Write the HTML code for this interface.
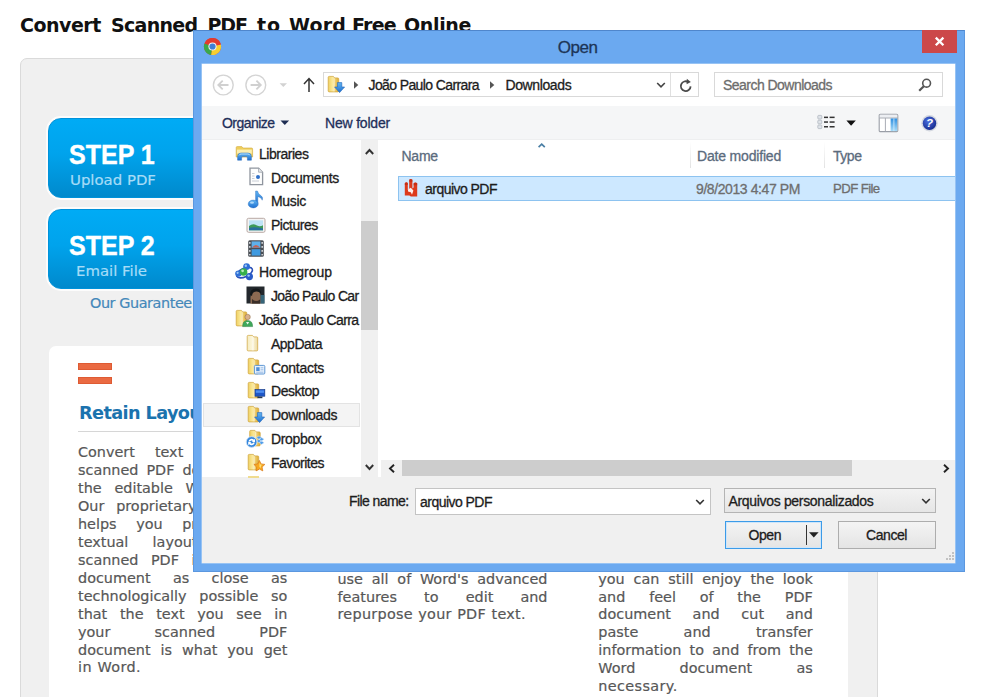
<!DOCTYPE html>
<html lang="en">
<head>
<meta charset="utf-8">
<title>Convert Scanned PDF to Word Free Online</title>
<style>
html,body{margin:0;padding:0;}
body{width:984px;height:697px;overflow:hidden;background:#fff;position:relative;
  font-family:"DejaVu Sans","Liberation Sans",sans-serif;color:#555;}
.abs{position:absolute;white-space:nowrap;}
/* ---------- web page behind ---------- */
#title{left:20px;top:12.5px;font-size:19px;line-height:24px;font-weight:bold;color:#111;}
#panel{position:absolute;left:20px;top:58px;width:858px;height:700px;background:#f0f0f0;
  border:1px solid #dadada;border-radius:7px;box-sizing:border-box;}
.step{position:absolute;left:48px;width:200px;height:80px;border-radius:13px;
  background:linear-gradient(#00abf5 0%,#00a3ec 45%,#0089cc 100%);
  box-shadow:0 0 0 2px rgba(255,255,255,.8);border:1px solid #0092da;box-sizing:border-box;}
.step b{position:absolute;left:19.5px;top:21.5px;-webkit-text-stroke:0.4px;font-family:"Liberation Sans",sans-serif;font-weight:bold;
  font-size:27.5px;line-height:27px;color:#fff;white-space:nowrap;transform:scaleX(.91);transform-origin:0 0;}
.step span{position:absolute;top:52px;-webkit-text-stroke:0.2px;font-size:14.9px;line-height:18px;color:#a6dcf7;white-space:nowrap;}
#guar{left:90px;top:293.6px;font-size:14.4px;letter-spacing:-0.42px;-webkit-text-stroke:0.2px;line-height:18px;color:#4488ba;}
#card{position:absolute;left:49px;top:346px;width:799px;height:400px;background:#fff;border-radius:7px;}
.bar{position:absolute;left:78px;width:34px;height:7px;background:#ea6a42;border:1px solid #de5b33;box-sizing:border-box;}
#h3{left:79px;top:401.8px;font-size:17.7px;letter-spacing:-0.62px;line-height:22px;font-weight:bold;color:#1b73ae;}
#hr{position:absolute;left:78px;top:431px;width:210px;height:1px;background:#d6d6d6;}
.para{position:absolute;font-size:14.4px;line-height:17.95px;color:#575757;-webkit-text-stroke:0.2px;}
.para div{height:17.95px;white-space:nowrap;text-align:justify;text-align-last:justify;overflow:visible;white-space:normal;}
.para div.l{text-align-last:left;word-spacing:0.6px;white-space:nowrap;}
/* ---------- Open dialog ---------- */
#dlg{position:absolute;left:0;top:0;width:0;height:0;}
#dlg div{position:absolute;box-sizing:border-box;}
.seg{font-family:"Liberation Sans",sans-serif;font-size:14px;line-height:16px;-webkit-text-stroke:0.3px;}
.t{color:#1c1c1c;}
.tb{color:#1e2f5a;}
.hd{color:#5b6b7d;}
.gr{color:#6e6e6e;}
#frame{left:193px;top:30px;width:772px;height:542px;background:#6ba9f0;border:1px solid #5b97df;border-top-color:#4f86cc;}
#content{left:202px;top:64px;width:753px;height:499px;background:#fff;box-shadow:0 0 0 .5px rgba(255,255,255,.6);}
#toolbar{left:202px;top:106px;width:753px;height:34px;background:#f5f6f7;border-bottom:1px solid #eeeff0;}
#bottom{left:202px;top:477px;width:753px;height:86px;background:#f0f0f0;}
#dtitle{left:557.7px;top:38.3px;font-size:17px;line-height:20px;color:#1d3557;}
#close{left:922px;top:30px;width:35px;height:23px;background:#cc4849;}
#addr{left:323px;top:72px;width:376px;height:25px;background:#fff;border:1px solid #d9d9d9;}
#addrsep{left:670px;top:73px;width:1px;height:23px;background:#e0e0e0;}
#a1{left:368.5px;top:77px;}
#a2{left:505.5px;top:77px;}
#search{left:714px;top:72px;width:229px;height:25px;background:#fff;border:1px solid #d9d9d9;}
#s1{left:723px;top:77px;color:#6d6d6d;}
#t1{left:222px;top:115px;}
#t2{left:325px;top:115px;}
.n0{left:259px;}
.n1{left:271px;}
#navsel{left:203px;top:403px;width:157px;height:24px;background:#f4f4f4;border:1px solid #e3e3e3;}
#vtrack{left:361px;top:140px;width:17px;height:337px;background:#f0f0f0;}
#vthumb{left:361px;top:221px;width:17px;height:109px;background:#cdcdcd;}
.hsep{top:142px;width:1px;height:26px;background:linear-gradient(#fff,#e2e2e2);}
#h1{left:401.5px;top:148px;}
#h2{left:697px;top:148px;}
#h3d{left:833px;top:148px;}
#row{left:398px;top:176px;width:557px;height:25px;background:#cde8ff;border:1px solid #8dc3f0;border-right:none;}
#r1{left:425px;top:180.5px;}
#r2{left:696px;top:180.5px;}
#r3{left:833px;top:180.5px;font-size:13.2px;}
#htrack{left:381px;top:460px;width:574px;height:17px;background:#f0f0f0;}
#hthumb{left:402px;top:460px;width:450px;height:16px;background:#cdcdcd;}
#f1{left:349px;top:493px;}
#fname{left:415px;top:488px;width:296px;height:27px;background:#fff;border:1px solid #c4c4c4;}
#f2{left:420px;top:494px;}
#ftype{left:724px;top:488px;width:212px;height:25px;background:linear-gradient(#f2f2f2,#e6e6e6);border:1px solid #b4b4b4;}
#f3{left:728.5px;top:492.5px;}
.btn{background:linear-gradient(#f4f4f4,#e4e4e4);border:1px solid #adadad;}
#bopen{left:725px;top:521px;width:97px;height:28px;border-color:#3c9be8;box-shadow:inset 0 0 0 1px #cfe6fa;}
#bcancel{left:838px;top:521px;width:98px;height:28px;}
#b1{left:748.5px;top:527px;}
#b2{left:866px;top:527px;}
#bsep{left:805.5px;top:525px;width:1.5px;height:20px;background:#333;}
#a1{letter-spacing:-0.61px;}
#a2{letter-spacing:-0.39px;}
#t1{letter-spacing:-0.54px;}
#t2{letter-spacing:-0.19px;}
#h1{letter-spacing:-0.24px;}
#h2{letter-spacing:-0.18px;}
#h3d{letter-spacing:-0.46px;}
#r1{letter-spacing:-0.53px;}
#r2{letter-spacing:-0.41px;}
#r3{letter-spacing:-0.59px;}
#f3{letter-spacing:-0.33px;}
#b2{letter-spacing:-0.43px;}
#dtitle{letter-spacing:-0.40px;}
#b1{letter-spacing:-0.44px;}
#f1{letter-spacing:-0.59px;}
#f2{letter-spacing:-0.53px;}
#s1{letter-spacing:-0.53px;}
#n1{letter-spacing:-0.47px;}
#n2{letter-spacing:-0.31px;}
#n3{letter-spacing:-0.31px;}
#n4{letter-spacing:-0.48px;}
#n5{letter-spacing:-0.64px;}
#n6{letter-spacing:-0.02px;}
#n7{letter-spacing:-0.64px;}
#n8{letter-spacing:-0.59px;}
#n9{letter-spacing:-0.50px;}
#n10{letter-spacing:-0.28px;}
#n11{letter-spacing:-0.48px;}
#n12{letter-spacing:-0.36px;}
#n13{letter-spacing:-0.35px;}
#n14{letter-spacing:-0.51px;}
#w0{letter-spacing:-0.50px;}
#w1{letter-spacing:-0.69px;}
#w2{letter-spacing:-1.06px;}
#w3{letter-spacing:0.93px;}
#w4{letter-spacing:0.17px;}
#w5{letter-spacing:-0.73px;}
#w6{letter-spacing:-0.35px;}

</style>
</head>
<body>
<div id="title" class="abs"><span id="w0" class="abs" style="left:0px;top:0">Convert</span> <span id="w1" class="abs" style="left:91px;top:0">Scanned</span> <span id="w2" class="abs" style="left:187.5px;top:0">PDF</span> <span id="w3" class="abs" style="left:237px;top:0">to</span> <span id="w4" class="abs" style="left:269px;top:0">Word</span> <span id="w5" class="abs" style="left:332px;top:0">Free</span> <span id="w6" class="abs" style="left:384px;top:0">Online</span></div>
<div id="panel"></div>
<div class="step" style="top:118px"><b>STEP 1</b><span style="left:21px">Upload PDF</span></div>
<div class="step" style="top:209px"><b>STEP 2</b><span style="left:27px">Email File</span></div>
<div id="guar" class="abs">Our Guarantee</div>
<div id="card"></div>
<div class="bar" style="top:363px"></div>
<div class="bar" style="top:377px"></div>
<div id="h3" class="abs">Retain Layout</div>
<div id="hr"></div>
<div class="para" style="left:78px;top:444.2px;width:209.3px">
<div class="l" style="word-spacing:15.4px">Convert text from a</div>
<div class="l" style="word-spacing:3.4px">scanned PDF document to</div>
<div class="l" style="word-spacing:8.2px">the editable Word file.</div>
<div class="l" style="word-spacing:7.2px">Our proprietary technology</div>
<div class="l" style="word-spacing:15px">helps you preserve the</div>
<div class="l" style="word-spacing:19.7px">textual layout of your</div>
<div class="l" style="word-spacing:7.9px">scanned PDF in the Word</div>
<div>document as close as</div>
<div>technologically possible so</div>
<div>that the text you see in</div>
<div>your scanned PDF</div>
<div>document is what you get</div>
<div class="l" style="letter-spacing:.4px">in Word.</div>
</div>
<div class="para" style="left:337.5px;top:570.6px;width:210px">
<div>use all of Word's advanced</div>
<div>features to edit and</div>
<div class="l" style="letter-spacing:.27px">repurpose your PDF text.</div>
</div>
<div class="para" style="left:598.3px;top:570.6px;width:214.5px">
<div>you can still enjoy the look</div>
<div>and feel of the PDF</div>
<div>document and cut and</div>
<div>paste and transfer</div>
<div>information to and from the</div>
<div>Word document as</div>
<div class="l" style="letter-spacing:.38px">necessary.</div>
</div>
<div id="dlg">
  <svg class="abs" style="left:0;top:0" width="0" height="0"><defs>
<linearGradient id="fg" x1="0" y1="0" x2="1" y2="0"><stop offset="0" stop-color="#efd062"/><stop offset=".42" stop-color="#fbe99a"/><stop offset="1" stop-color="#dcaa34"/></linearGradient>
<linearGradient id="fgp" x1="0" y1="0" x2="1" y2="0"><stop offset="0" stop-color="#f6ecc0"/><stop offset=".5" stop-color="#fcf6dc"/><stop offset="1" stop-color="#ecd9a0"/></linearGradient>
<linearGradient id="bl" x1="0" y1="0" x2="0" y2="1"><stop offset="0" stop-color="#5fb4f2"/><stop offset="1" stop-color="#1f6fd0"/></linearGradient>
<linearGradient id="pv" x1="0" y1="0" x2="0" y2="1"><stop offset="0" stop-color="#2f8fe0"/><stop offset="1" stop-color="#a8dcf8"/></linearGradient>
<radialGradient id="hp" cx=".4" cy=".35" r=".7"><stop offset="0" stop-color="#4a6fe0"/><stop offset="1" stop-color="#15298c"/></radialGradient>
<radialGradient id="cr" cx=".5" cy=".3" r=".8"><stop offset="0" stop-color="#f0584a"/><stop offset="1" stop-color="#c42a1e"/></radialGradient>
</defs></svg>
  <div id="frame"></div>
  <div id="content"></div>
  <div id="toolbar"></div>
  <div id="bottom"></div>
  <!-- title bar -->
  <svg class="abs" style="left:203px;top:37px" width="19" height="19" viewBox="0 0 19 19">
    <circle cx="9.5" cy="9.5" r="8.6" fill="#e33b2e"/>
    <path d="M9.5 9.5 L1.4 6.6 A8.6 8.6 0 0 0 8.2 18 Z" fill="#3aa84a"/>
    <path d="M9.5 9.5 L8.2 18 A8.6 8.6 0 0 0 17.9 7.6 Z" fill="#f7cf2f"/>
    <path d="M1.6 6.2 A8.6 8.6 0 0 1 17.9 7.6 L9.5 7.6 Z" fill="#e33b2e"/>
    <circle cx="9.5" cy="9.5" r="4.1" fill="#f2f2f2"/>
    <circle cx="9.5" cy="9.5" r="3.1" fill="#3f7fd6"/>
  </svg>
  <div id="dtitle" class="abs seg">Open</div>
  <div id="close"><svg width="35" height="23" viewBox="0 0 35 23"><path d="M13.8 7.6 L21.4 15.2 M21.4 7.6 L13.8 15.2" stroke="#fff" stroke-width="2.3" fill="none"/></svg></div>
  <!-- address row -->
  <svg class="abs" style="left:211px;top:73px" width="90" height="24" viewBox="0 0 90 24">
    <circle cx="12.3" cy="12" r="9.9" fill="none" stroke="#d4d4d4" stroke-width="1.4"/>
    <path d="M17.5 12 H7.5 M11.7 7.6 L7.3 12 L11.7 16.4" fill="none" stroke="#d0d0d0" stroke-width="1.8"/>
    <circle cx="44.8" cy="12" r="9.9" fill="none" stroke="#d4d4d4" stroke-width="1.4"/>
    <path d="M39.6 12 H49.6 M45.4 7.6 L49.8 12 L45.4 16.4" fill="none" stroke="#d0d0d0" stroke-width="1.8"/>
    <path d="M68.6 10.3 h7.4 l-3.7 3.7 z" fill="#d2d2d2"/>
  </svg>
  <svg class="abs" style="left:301px;top:76px" width="16" height="18" viewBox="0 0 16 18">
    <path d="M8 16 V3 M3 8 L8 2.6 L13 8" fill="none" stroke="#333" stroke-width="1.5"/>
  </svg>
  <div id="addr"></div>
  <div id="addrsep"></div>
  <svg class="abs" style="left:327px;top:75px" width="19" height="19" viewBox="0 0 19 19"><path d="M1.2 2.4 q0-1 1-1 h4.2 l1.3 1.5 h3 q1 0 1 1 v12 q0 1-1 1 h-8.5 q-1 0-1-1z" fill="url(#fg)" stroke="#cfa23a" stroke-width=".7"/><path d="M6.6 2.2 l1.2 1.4 v13 h-1.6z" fill="#fff" opacity=".45"/><path d="M10.4 7.6 h4.4 v4.4 h2.8 l-5 5.6 l-5-5.6 h2.8z" fill="url(#bl)" stroke="#1f63b8" stroke-width=".6"/></svg>

  <div id="a1" class="abs seg t">João Paulo Carrara</div>
  <div id="a2" class="abs seg t">Downloads</div>
  <svg class="abs" style="left:352px;top:80px" width="8" height="10" viewBox="0 0 8 10"><path d="M2 1.2 L6.3 5 L2 8.8 Z" fill="#555"/></svg>
  <svg class="abs" style="left:488px;top:80px" width="8" height="10" viewBox="0 0 8 10"><path d="M2 1.2 L6.3 5 L2 8.8 Z" fill="#555"/></svg>
  <svg class="abs" style="left:655px;top:80px" width="12" height="10" viewBox="0 0 12 10"><path d="M2.2 3 L6 6.8 L9.8 3" fill="none" stroke="#444" stroke-width="1.6"/></svg>
  <svg class="abs" style="left:678px;top:77.5px" width="16" height="16" viewBox="0 0 16 16"><path d="M12.6 8.4 A4.9 4.9 0 1 1 10.4 4.1" fill="none" stroke="#4a4a4a" stroke-width="1.8"/><path d="M8.8 .8 L12.8 4 L8.6 6.2 Z" fill="#4a4a4a"/></svg>
  <div id="search"></div>
  <div id="s1" class="abs seg">Search Downloads</div>
  <svg class="abs" style="left:917px;top:77px" width="16" height="16" viewBox="0 0 16 16"><circle cx="9.6" cy="6.2" r="3.9" fill="none" stroke="#555" stroke-width="1.6"/><path d="M6.8 9.2 L2.2 13.8" stroke="#555" stroke-width="2.2"/></svg>
  <!-- toolbar row -->
  <div id="t1" class="abs seg tb">Organize</div>
  <svg class="abs" style="left:279px;top:119px" width="12" height="8" viewBox="0 0 12 8"><path d="M1.5 1.5 h8.6 l-4.3 4.6 z" fill="#1d2d52"/></svg>
  <div id="t2" class="abs seg tb">New folder</div>
  <svg class="abs" style="left:817px;top:114px" width="19" height="17" viewBox="0 0 19 17"><g fill="#dfe3e8" stroke="#aab2bc" stroke-width=".7"><rect x=".8" y="1.4" width="4" height="3.6" rx=".8"/><rect x=".8" y="6.2" width="4" height="3.6" rx=".8"/><rect x=".8" y="11" width="4" height="3.6" rx=".8"/></g><g fill="#333"><rect x="7" y="2.6" width="4" height="1.5"/><rect x="12.6" y="2.6" width="5" height="1.5"/><rect x="7" y="7.3" width="4" height="1.5"/><rect x="12.6" y="7.3" width="5" height="1.5"/><rect x="7" y="12" width="4" height="1.5"/><rect x="12.6" y="12" width="5" height="1.5"/></g></svg>
<svg class="abs" style="left:845px;top:119px" width="12" height="8" viewBox="0 0 12 8"><path d="M1.4 1.4 h9.4 l-4.7 5.4z" fill="#111"/></svg>
<svg class="abs" style="left:878px;top:113px" width="21" height="20" viewBox="0 0 21 20"><rect x="1.2" y="1.2" width="18.6" height="17.4" rx="1.2" fill="#fff" stroke="#9a9ea6" stroke-width="1.1"/><rect x="1.8" y="1.8" width="17.4" height="3" fill="#eceef2"/><path d="M1.2 5 h18.6 M7.4 5 v13.4" stroke="#a8acb4" stroke-width="1"/><rect x="12.6" y="5.5" width="6.6" height="12.6" fill="url(#pv)"/><rect x="15.4" y="5.5" width="1" height="12.6" fill="#d6efff" opacity=".8"/></svg>
<svg class="abs" style="left:920px;top:114px" width="19" height="19" viewBox="0 0 19 19"><circle cx="9.5" cy="9.2" r="8.2" fill="#d4d8e0"/><circle cx="9.5" cy="9.2" r="6.7" fill="url(#hp)"/><text x="9.6" y="13.2" text-anchor="middle" font-family="Liberation Sans, sans-serif" font-weight="bold" font-style="italic" font-size="11.5" fill="#fff">?</text></svg>

  <!-- nav pane -->
  <div id="navsel"></div>
  <div id="vtrack"></div><div id="vthumb"></div>
  <svg class="abs" style="left:363px;top:146px" width="13" height="12" viewBox="0 0 13 12"><path d="M2.8 8 L6.5 4 L10.2 8" fill="none" stroke="#333" stroke-width="1.9"/></svg>
  <svg class="abs" style="left:363px;top:461px" width="13" height="12" viewBox="0 0 13 12"><path d="M2.8 4 L6.5 8 L10.2 4" fill="none" stroke="#333" stroke-width="1.9"/></svg>
  <div id="n1" class="abs seg t n0" style="top:146px">Libraries</div>
  <div id="n2" class="abs seg t n1" style="top:169.5px">Documents</div>
  <div id="n3" class="abs seg t n1" style="top:193px">Music</div>
  <div id="n4" class="abs seg t n1" style="top:217px">Pictures</div>
  <div id="n5" class="abs seg t n1" style="top:240.5px">Videos</div>
  <div id="n6" class="abs seg t n0" style="top:264px">Homegroup</div>
  <div id="n7" class="abs seg t n1" style="top:288px">João Paulo Car</div>
  <div id="n8" class="abs seg t n0" style="top:312px">João Paulo Carra</div>
  <div id="n9" class="abs seg t n1" style="top:336px">AppData</div>
  <div id="n10" class="abs seg t n1" style="top:359.5px">Contacts</div>
  <div id="n11" class="abs seg t n1" style="top:383px">Desktop</div>
  <div id="n12" class="abs seg t n1" style="top:407px">Downloads</div>
  <div id="n13" class="abs seg t n1" style="top:431px">Dropbox</div>
  <div id="n14" class="abs seg t n1" style="top:454.5px">Favorites</div>
  <svg class="abs" style="left:235px;top:145px" width="19" height="16" viewBox="0 0 19 16"><path d="M1.2 2.6 q0-1 1-1 h4.6 l1.4 1.4 h8.4 q1 0 1 1 v8 h-16.4z" fill="#efcf5c" stroke="#d2aa40" stroke-width=".6"/><path d="M2 4.6 h14.8 v4 h-14.8z" fill="#fbeeb0"/><path d="M2.6 15.2 v-3.6 q0-3.6 3.4-3.6 h7 q3.4 0 3.4 3.6 v3.6 h-4 v-2.4 q0-1.2-1.2-1.2 h-3.4 q-1.2 0-1.2 1.2 v2.4z" fill="url(#bl)" stroke="#2a6dbd" stroke-width=".5"/><path d="M4 10.4 q.6-1.4 2.2-1.4 h6.6 q1.6 0 2.2 1.4" fill="none" stroke="#bfe2fb" stroke-width=".9"/></svg>
<svg class="abs" style="left:248px;top:167px" width="17" height="19" viewBox="0 0 17 19"><path d="M2 1.2 h8.6 l4 4 v12.4 h-12.6z" fill="#fdfdfd" stroke="#8f959e" stroke-width="1.3"/><path d="M10.6 1.2 v4 h4" fill="#e8eaee" stroke="#9aa0a8" stroke-width=".8"/><path d="M4 6.5 h2.5 M4 9 h2.5 M4 11.5 h2.5 M4 14 h7" stroke="#c9ced6" stroke-width="1"/><circle cx="10" cy="10" r="2" fill="#2f6fc8"/></svg>
<svg class="abs" style="left:247px;top:190px" width="17" height="19" viewBox="0 0 17 19"><path d="M8.6 1 h1.8 q.6 3 4 5 q2 1.6 .8 4.2 q-.4-2.6-4.4-3.8 v8 h-2.2z" fill="url(#bl)" stroke="#1f63b8" stroke-width=".4"/><ellipse cx="6.2" cy="14" rx="5" ry="3.9" fill="url(#bl)" stroke="#1f63b8" stroke-width=".4"/><ellipse cx="5" cy="12.6" rx="2" ry="1.2" fill="#bfe2fb" opacity=".85"/></svg>
<svg class="abs" style="left:246px;top:217px" width="20" height="17" viewBox="0 0 20 17"><rect x="1" y="1.3" width="18" height="14" rx="1.5" fill="#f4f4f4" stroke="#b9a9a4" stroke-width="1"/><rect x="3" y="3.3" width="14" height="10" fill="#bfe3f6"/><path d="M3 9 q4-3.4 8-.6 q3 1.6 6-.2 v5.1 h-14z" fill="#3f9a58"/><path d="M3 11 q5-1.6 14 .4 v1.9 h-14z" fill="#2a6f9e"/></svg>
<svg class="abs" style="left:247px;top:239px" width="18" height="19" viewBox="0 0 18 19"><rect x="1.2" y="1.2" width="15.6" height="16.6" rx="1.5" fill="#4a4f55"/><rect x="4.6" y="2.4" width="8.8" height="6.4" fill="#5fb0ea"/><rect x="4.6" y="10.2" width="8.8" height="6.4" fill="#3f9ae0"/><path d="M5 8.6 q4-5 8 0z" fill="#d8553a" opacity=".85"/><g fill="#c9cdd2"><rect x="2" y="3" width="1.6" height="1.8"/><rect x="2" y="7" width="1.6" height="1.8"/><rect x="2" y="11" width="1.6" height="1.8"/><rect x="2" y="15" width="1.6" height="1.4"/><rect x="14.4" y="3" width="1.6" height="1.8"/><rect x="14.4" y="7" width="1.6" height="1.8"/><rect x="14.4" y="11" width="1.6" height="1.8"/><rect x="14.4" y="15" width="1.6" height="1.4"/></g></svg>
<svg class="abs" style="left:234px;top:262px" width="21" height="20" viewBox="0 0 21 20"><ellipse cx="10.5" cy="10.6" rx="8.6" ry="4.2" fill="none" stroke="#2a50b8" stroke-width="1.6" transform="rotate(-25 10.5 10.6)"/><circle cx="12.6" cy="4.6" r="3.4" fill="#2f6fd6"/><circle cx="11.8" cy="3.8" r="1.2" fill="#9cc8f5"/><circle cx="4.4" cy="11.6" r="3.2" fill="#2f6fd6"/><circle cx="3.6" cy="10.8" r="1.1" fill="#9cc8f5"/><circle cx="15.4" cy="14.6" r="3.6" fill="#2a5cc8"/><circle cx="14.6" cy="13.6" r="1.2" fill="#9cc8f5"/><circle cx="9.6" cy="10" r="3.8" fill="#36b04a"/><circle cx="8.6" cy="8.8" r="1.4" fill="#b6ecb8"/></svg>
<svg class="abs" style="left:246px;top:286px" width="19" height="18" viewBox="0 0 19 18"><rect x=".5" y=".5" width="18" height="17" fill="#23282d"/><path d="M4.5 17.5 v-6 q0-7 5.5-7 q4.6 0 4.6 6 v7z" fill="#8d6a52"/><path d="M4 9 q0-6.6 6-6.6 q5.2 0 5 5 q-2.6-2.4-6-1.6 q-2.6.6-3 4.2z" fill="#15181b"/><path d="M6 13 q3.6 3.6 8 .4 v4.1 h-8z" fill="#3a2e28"/><rect x="14.6" y="9" width="3.9" height="8.5" fill="#3f7f9a" opacity=".7"/></svg>
<svg class="abs" style="left:235px;top:309px" width="19" height="19" viewBox="0 0 19 19"><path d="M1.2 2.4 q0-1 1-1 h4.2 l1.3 1.5 h3 q1 0 1 1 v12 q0 1-1 1 h-8.5 q-1 0-1-1z" fill="url(#fg)" stroke="#cfa23a" stroke-width=".7"/><path d="M6.6 2.2 l1.2 1.4 v13 h-1.6z" fill="#fff" opacity=".45"/><circle cx="12.6" cy="8" r="2.7" fill="#d9b08a" stroke="#8a6a4a" stroke-width=".5"/><path d="M7.6 17.6 q0-6.2 5-6.2 q5 0 5 6.2z" fill="#3fa85a" stroke="#2b7f42" stroke-width=".5"/><path d="M11 13 l1.6 2.4 l1.6-2.4z" fill="#e9f5ea"/></svg>
<svg class="abs" style="left:246px;top:334px" width="17" height="19" viewBox="0 0 17 19"><path d="M1.2 2.4 q0-1 1-1 h4.2 l1.3 1.5 h3 q1 0 1 1 v12 q0 1-1 1 h-8.5 q-1 0-1-1z" fill="url(#fgp)" stroke="#cfa23a" stroke-width=".7"/><path d="M6.6 2.2 l1.2 1.4 v13 h-1.6z" fill="#fff" opacity=".45"/></svg>
<svg class="abs" style="left:247px;top:357px" width="19" height="19" viewBox="0 0 19 19"><path d="M1.2 2.4 q0-1 1-1 h4.2 l1.3 1.5 h3 q1 0 1 1 v12 q0 1-1 1 h-8.5 q-1 0-1-1z" fill="url(#fg)" stroke="#cfa23a" stroke-width=".7"/><path d="M6.6 2.2 l1.2 1.4 v13 h-1.6z" fill="#fff" opacity=".45"/><rect x="7.4" y="8.4" width="10.4" height="8.6" rx="1" fill="#e9f2fb" stroke="#5f97d4" stroke-width="1"/><rect x="9.2" y="10.2" width="3.4" height="3.8" fill="#4f8fd8"/><path d="M13.6 10.8 h2.8 M13.6 12.8 h2.8 M9.2 15.2 h7.2" stroke="#8fb6e4" stroke-width=".9"/></svg>
<svg class="abs" style="left:247px;top:381px" width="19" height="19" viewBox="0 0 19 19"><path d="M1.2 2.4 q0-1 1-1 h4.2 l1.3 1.5 h3 q1 0 1 1 v12 q0 1-1 1 h-8.5 q-1 0-1-1z" fill="url(#fg)" stroke="#cfa23a" stroke-width=".7"/><path d="M6.6 2.2 l1.2 1.4 v13 h-1.6z" fill="#fff" opacity=".45"/><rect x="8" y="8.6" width="9.8" height="6.6" fill="#1f57c8" stroke="#173c8a" stroke-width=".7"/><rect x="8.8" y="9.4" width="8.2" height="2.4" fill="#4f8ff0"/><rect x="10.4" y="15.6" width="5" height="1.6" fill="#27364f"/></svg>
<svg class="abs" style="left:247px;top:405px" width="19" height="19" viewBox="0 0 19 19"><path d="M1.2 2.4 q0-1 1-1 h4.2 l1.3 1.5 h3 q1 0 1 1 v12 q0 1-1 1 h-8.5 q-1 0-1-1z" fill="url(#fg)" stroke="#cfa23a" stroke-width=".7"/><path d="M6.6 2.2 l1.2 1.4 v13 h-1.6z" fill="#fff" opacity=".45"/><path d="M10.4 7.6 h4.4 v4.4 h2.8 l-5 5.6 l-5-5.6 h2.8z" fill="url(#bl)" stroke="#1f63b8" stroke-width=".6"/></svg>
<svg class="abs" style="left:245px;top:429px" width="21" height="19" viewBox="0 0 21 19"><g transform="translate(3.5,0)"><path d="M1.2 2.4 q0-1 1-1 h4.2 l1.3 1.5 h3 q1 0 1 1 v12 q0 1-1 1 h-8.5 q-1 0-1-1z" fill="url(#fg)" stroke="#cfa23a" stroke-width=".7"/><path d="M6.6 2.2 l1.2 1.4 v13 h-1.6z" fill="#fff" opacity=".45"/></g><path d="M11.4 8.6 l2.6-1.7 l2.6 1.7 l-2.6 1.7z M14 10.3 l2.6-1.7 l2.5 1.7 l-2.6 1.7z M11.4 12 l2.6-1.7 l2.6 1.7 l-2.6 1.7z M14 13.7 l2.6-1.7 l2.5 1.7 l-2.6 1.7z" fill="#4f9ce8" stroke="#dbeafb" stroke-width=".5"/><circle cx="6.6" cy="13" r="5.4" fill="#3587dd" stroke="#cfe3f8" stroke-width=".9"/><path d="M3.4 12.6 a3.3 3.3 0 0 1 5.6-1.8 l1-1 v3.2 h-3.2 l1.1-1.1 a1.8 1.8 0 0 0 -2.9 .7z M9.8 13.4 a3.3 3.3 0 0 1 -5.6 1.8 l-1 1 v-3.2 h3.2 l-1.1 1.1 a1.8 1.8 0 0 0 2.9-.7z" fill="#fff"/></svg>
<svg class="abs" style="left:247px;top:453px" width="19" height="19" viewBox="0 0 19 19"><path d="M1.2 2.4 q0-1 1-1 h4.2 l1.3 1.5 h3 q1 0 1 1 v12 q0 1-1 1 h-8.5 q-1 0-1-1z" fill="url(#fg)" stroke="#cfa23a" stroke-width=".7"/><path d="M6.6 2.2 l1.2 1.4 v13 h-1.6z" fill="#fff" opacity=".45"/><path d="M12.4 7.4 l1.7 3.5 l3.8.5 l-2.8 2.7 l.7 3.8 l-3.4-1.8 l-3.4 1.8 l.7-3.8 l-2.8-2.7 l3.8-.5z" fill="#f7a81e" stroke="#d9781a" stroke-width=".7"/><path d="M12.4 9.4 l.9 2 l2 .3 l-1.5 1.4 l.4 2 l-1.8-1 z" fill="#fde27a"/></svg>
<div style="left:248px;top:476px;width:11px;height:1.5px;background:#f0dc90"></div>

  <!-- file list -->
  <div id="hsep1" class="hsep" style="left:690px"></div>
  <div id="hsep2" class="hsep" style="left:824px"></div>
  <svg class="abs" style="left:537px;top:141.5px" width="10" height="7" viewBox="0 0 10 7"><path d="M1.6 5.2 L4.7 2.2 L7.8 5.2" fill="none" stroke="#4a7fa5" stroke-width="1.7"/></svg>
  <div id="h1" class="abs seg hd">Name</div>
  <div id="h2" class="abs seg hd">Date modified</div>
  <div id="h3d" class="abs seg hd">Type</div>
  <div id="row"></div>
  <div id="r1" class="abs seg t">arquivo PDF</div>
  <div id="r2" class="abs seg gr">9/8/2013 4:47 PM</div>
  <div id="r3" class="abs seg gr">PDF File</div>
  <svg class="abs" style="left:404px;top:178px" width="15" height="20" viewBox="0 0 15 20"><path d="M.8 5.2 q1.4-1.6 3-.2 v7 l1.4-1 v-9.2 q1.6-1.6 3.2 0 v8.6 l1.2-.8 v-4.4 q1.8-1.6 3.6 0 v13.4 h-6.4 l-1.4-1.2 h-4.6z" fill="#dd3a1c"/><path d="M4 11.6 l2.8-1.8 l2.6 2.6 l-1.4 4.4 l-1.2-2.6 l-2.8-.6z" fill="#fff" opacity=".92"/><path d="M.8 5.2 q1.4-1.6 3-.2 v2 h-3z M5.2 1.8 q1.6-1.6 3.2 0 v2 h-3.2z M9.6 5.2 q1.8-1.6 3.6 0 v2 h-3.6z" fill="#b9270f" opacity=".6"/></svg>

  <div id="htrack"></div><div id="hthumb"></div>
  <svg class="abs" style="left:386px;top:462px" width="12" height="13" viewBox="0 0 12 13"><path d="M8 2.8 L4 6.5 L8 10.2" fill="none" stroke="#222" stroke-width="1.9"/></svg>
  <svg class="abs" style="left:940px;top:462px" width="12" height="13" viewBox="0 0 12 13"><path d="M4 2.8 L8 6.5 L4 10.2" fill="none" stroke="#222" stroke-width="1.9"/></svg>
  <!-- bottom panel -->
  <div id="f1" class="abs seg t">File name:</div>
  <div id="fname"></div>
  <div id="f2" class="abs seg t">arquivo PDF</div>
  <svg class="abs" style="left:694px;top:497px" width="12" height="10" viewBox="0 0 12 10"><path d="M2.2 3 L6 6.8 L9.8 3" fill="none" stroke="#333" stroke-width="1.6"/></svg>
  <div id="ftype"></div>
  <div id="f3" class="abs seg t">Arquivos personalizados</div>
  <svg class="abs" style="left:920px;top:496px" width="12" height="10" viewBox="0 0 12 10"><path d="M2.2 3 L6 6.8 L9.8 3" fill="none" stroke="#333" stroke-width="1.6"/></svg>
  <div id="bopen" class="btn"></div>
  <div id="b1" class="abs seg t">Open</div>
  <div id="bsep"></div>
  <svg class="abs" style="left:808px;top:531px" width="12" height="8" viewBox="0 0 12 8"><path d="M1 1.2 h9.6 l-4.8 5.4 z" fill="#222"/></svg>
  <div id="bcancel" class="btn"></div>
  <div id="b2" class="abs seg t">Cancel</div>
  <svg class="abs" style="left:944px;top:551px" width="11" height="11" viewBox="0 0 11 11"><g fill="#c2c2c2"><rect x="8" y="1" width="2" height="2"/><rect x="5" y="4" width="2" height="2"/><rect x="8" y="4" width="2" height="2"/><rect x="2" y="7" width="2" height="2"/><rect x="5" y="7" width="2" height="2"/><rect x="8" y="7" width="2" height="2"/></g></svg>
</div>
</body>
</html>
